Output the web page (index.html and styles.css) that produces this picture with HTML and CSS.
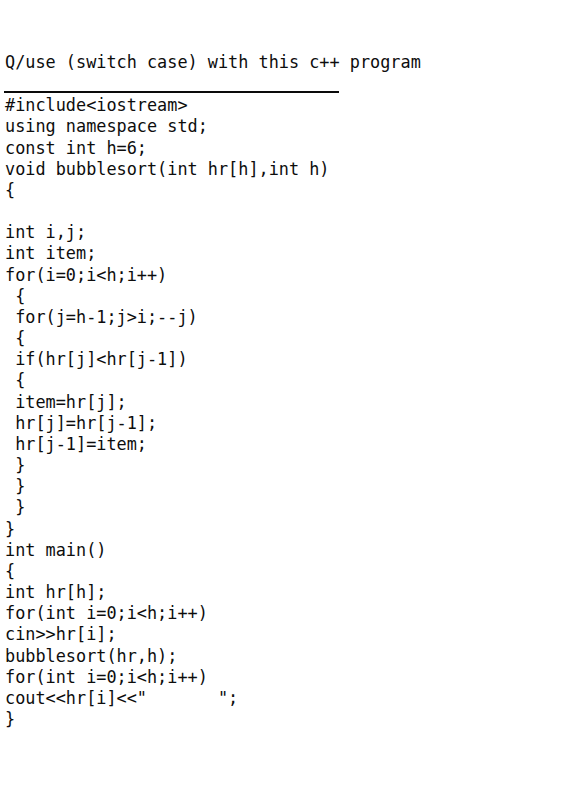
FILE: index.html
```html
<!DOCTYPE html>
<html>
<head>
<meta charset="utf-8">
<link rel="stylesheet" href="styles.css">
</head>
<body>
<main class="page">
<p class="question">Q/use (switch case) with this c++ program</p>
<hr class="rule">
<pre class="code">#include&lt;iostream&gt;
using namespace std;
const int h=6;
void bubblesort(int hr[h],int h)
{

int i,j;
int item;
for(i=0;i&lt;h;i++)
 {
 for(j=h-1;j&gt;i;--j)
 {
 if(hr[j]&lt;hr[j-1])
 {
 item=hr[j];
 hr[j]=hr[j-1];
 hr[j-1]=item;
 }
 }
 }
}
int main()
{
int hr[h];
for(int i=0;i&lt;h;i++)
cin&gt;&gt;hr[i];
bubblesort(hr,h);
for(int i=0;i&lt;h;i++)
cout&lt;&lt;hr[i]&lt;&lt;"       ";
}</pre>
</main>
</body>
</html>
```

FILE: styles.css
```css
html, body {
  margin: 0;
  padding: 0;
  background: #ffffff;
}

.page {
  padding: 52px 0 0 5px;
  font-family: "DejaVu Sans Mono", "Liberation Mono", monospace;
  font-size: 16.85px;
  line-height: 21.17px;
  color: #0d0d0d;
}

.question {
  margin: 0;
  white-space: pre;
}

.rule {
  margin: 17.5px 0 0 -1px;
  width: 335px;
  height: 2px;
  border: 0;
  background: #0a0a0a;
}

.code {
  margin: 2.5px 0 0 0;
  font: inherit;
  line-height: inherit;
  color: inherit;
}
```
